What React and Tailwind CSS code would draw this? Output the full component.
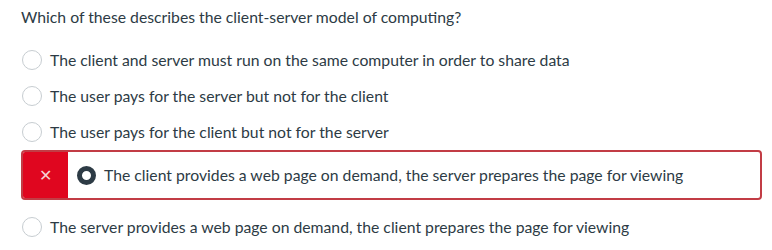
import React from "react";

const options = [
  { id: 1, text: "The client and server must run on the same computer in order to share data" },
  { id: 2, text: "The user pays for the server but not for the client" },
  { id: 3, text: "The user pays for the client but not for the server" },
  { id: 4, text: "The client provides a web page on demand, the server prepares the page for viewing", picked: true },
  { id: 5, text: "The server provides a web page on demand, the client prepares the page for viewing" },
];

const Radio = () => (
  <span className="block w-[20px] h-[20px] rounded-full border border-[#c7cdd1] bg-white shrink-0" />
);

const App = () => {
  return (
    <div
      className="w-[772px] h-[250px] bg-white text-[#2d3b45] pl-[21px] pr-[10px] overflow-hidden text-[15.75px]"
      style={{ fontFamily: "Lato, 'Noto Sans', sans-serif" }}
    >
      <div className="h-[42px] pt-[7px] leading-[20px]">
        Which of these describes the client-server model of computing?
      </div>

      {options.map((opt) =>
        opt.picked ? (
          <div
            key={opt.id}
            className="flex items-stretch h-[50px] mb-[9px] border-2 border-[#c23c45] rounded-[4px] overflow-hidden"
          >
            <div className="w-[45px] bg-[#e0061f] flex items-center justify-center text-[#f6d0d3] text-[16px]">
              ✕
            </div>
            <div className="flex items-center gap-[8px] pl-[9px]">
              <span className="block w-[19px] h-[19px] rounded-full border-[5px] border-[#2d3b45] shrink-0" />
              {opt.text}
            </div>
          </div>
        ) : (
          <div key={opt.id} className="flex items-center gap-[8px] h-[36px] pl-px">
            <Radio />
            {opt.text}
          </div>
        )
      )}
    </div>
  );
};

export default App;
